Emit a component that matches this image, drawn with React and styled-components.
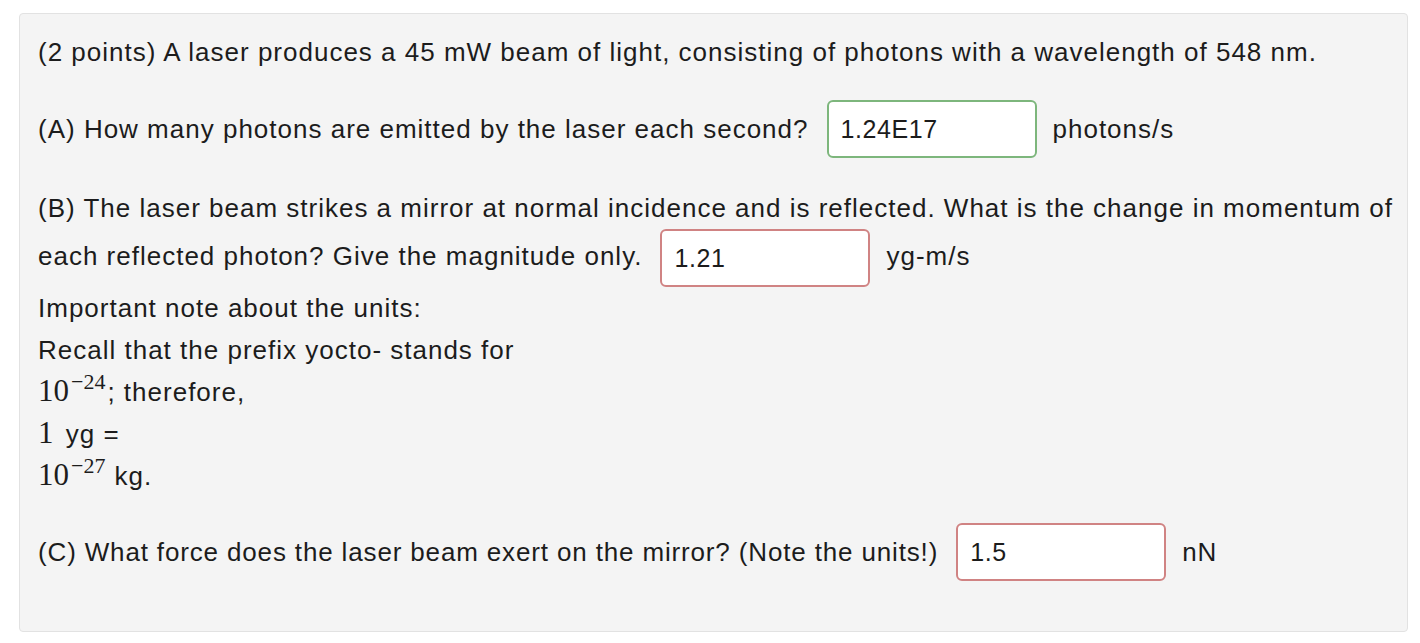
import React from "react";
import styled, { createGlobalStyle } from "styled-components";

const Global = createGlobalStyle`
  body {
    margin: 0;
    background: #ffffff;
    font-family: "Liberation Sans", Arial, sans-serif;
    color: #1c1c1c;
  }
`;

const Page = styled.div`
  padding: 13px 12px 10px 19px;
`;

const Panel = styled.div`
  background: #f4f4f4;
  border: 1px solid #e2e2e2;
  border-radius: 4px;
  padding: 20px 6px 50px 18px;
  font-size: 26px;
  letter-spacing: 1px;
`;

const Line = styled.p`
  margin: 0;
  line-height: ${(p) => p.lh || 36}px;
  margin-top: ${(p) => p.mt || 0}px;
`;

const Row = styled.div`
  display: flex;
  align-items: center;
  margin-top: ${(p) => p.mt || 0}px;
  line-height: 36px;
  white-space: nowrap;
  letter-spacing: ${(p) => p.ls || 1}px;
`;

const Answer = styled.input`
  box-sizing: border-box;
  width: 210px;
  height: 58px;
  margin: 0 16px 0 18px;
  padding: 0 12px;
  font-family: "Liberation Sans", Arial, sans-serif;
  font-size: 25px;
  letter-spacing: 0.6px;
  color: #1c1c1c;
  background: #fff;
  border: 2px solid ${(p) => (p.ok ? "#7db67c" : "#d08383")};
  border-radius: 6px;
  outline: none;
  vertical-align: middle;
`;

const InlineAnswer = styled(Answer)`
  margin-top: -6px;
  margin-bottom: -6px;
`;

const Note = styled.div`
  margin-top: 6px;
  line-height: 42px;
`;

const Math = styled.span`
  font-family: "Liberation Serif", "Times New Roman", serif;
  font-size: 31px;
  line-height: 0;
  letter-spacing: 0;
  margin-right: ${(p) => p.mr || 0}px;
  sup {
    font-size: 22px;
    margin-left: 2px;
    vertical-align: 12px;
    line-height: 0;
  }
`;

export default function App() {
  return (
    <Page>
      <Global />
      <Panel>
        <Line>
          (2 points) A laser produces a 45 mW beam of light, consisting of photons
          with a wavelength of 548 nm.
        </Line>
        <Row mt={30}>
          (A) How many photons are emitted by the laser each second?
          <Answer ok defaultValue="1.24E17" />
          photons/s
        </Row>
        <Line lh={48} mt={26}>
          (B) The laser beam strikes a mirror at normal incidence and is reflected.
          What is the change in momentum of each reflected photon? Give the
          magnitude only.
          <InlineAnswer defaultValue="1.21" />
          yg-m/s
        </Line>
        <Note>
          Important note about the units:
          <br />
          Recall that the prefix yocto- stands for
          <br />
          <Math mr={2}>
            10<sup>−24</sup>
          </Math>
          ; therefore,
          <br />
          <Math mr={4}>1</Math> yg =
          <br />
          <Math mr={9}>
            10<sup>−27</sup>
          </Math>
          kg.
        </Note>
        <Row mt={26} ls={0.85}>
          (C) What force does the laser beam exert on the mirror? (Note the units!)
          <Answer defaultValue="1.5" />
          nN
        </Row>
      </Panel>
    </Page>
  );
}
